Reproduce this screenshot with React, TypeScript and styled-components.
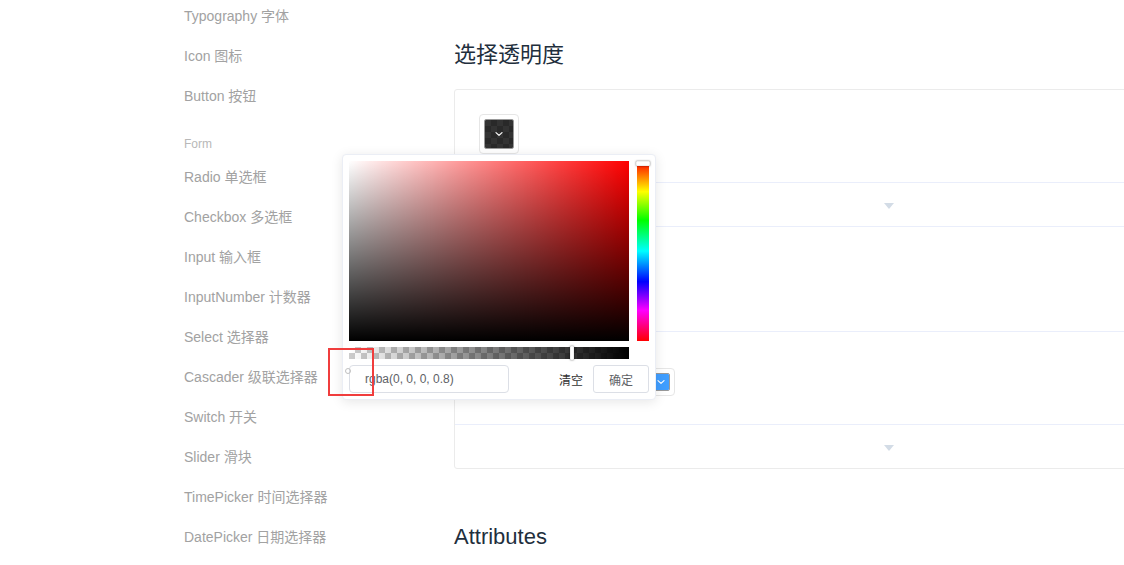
import React from "react";
import styled, { createGlobalStyle } from "styled-components";

const GlobalStyle = createGlobalStyle`
  html, body {
    margin: 0;
    padding: 0;
    background: #fff;
    overflow: hidden;
  }
  body {
    font-family: "Liberation Sans", "Noto Sans CJK SC", sans-serif;
  }
  * { box-sizing: border-box; }
`;

type NavEntry = { label: string; group?: boolean };

const navItems: NavEntry[] = [
	{ label: "Typography 字体" },
	{ label: "Icon 图标" },
	{ label: "Button 按钮" },
	{ label: "Form", group: true },
	{ label: "Radio 单选框" },
	{ label: "Checkbox 多选框" },
	{ label: "Input 输入框" },
	{ label: "InputNumber 计数器" },
	{ label: "Select 选择器" },
	{ label: "Cascader 级联选择器" },
	{ label: "Switch 开关" },
	{ label: "Slider 滑块" },
	{ label: "TimePicker 时间选择器" },
	{ label: "DatePicker 日期选择器" }
];

const CHECKER = `
	linear-gradient(45deg, #ccc 25%, transparent 25%),
	linear-gradient(135deg, #ccc 25%, transparent 25%),
	linear-gradient(45deg, transparent 75%, #ccc 75%),
	linear-gradient(135deg, transparent 75%, #ccc 75%)
`;

const Arrow = () => (
	<svg width="12" height="12" viewBox="0 0 12 12" fill="none">
		<path d="M3 4.6 L6 7.4 L9 4.6" stroke="#fff" strokeWidth="1.2" strokeLinecap="round" strokeLinejoin="round" />
	</svg>
);

const Picker = ({ size, color }: { size: number, color: string }) => (
	<Trigger size={size}>
		<Swatch>
			<SwatchColor color={color}>
				<Arrow />
			</SwatchColor>
		</Swatch>
	</Trigger>
);

const App = () => {
	return (
		<Page>
			<GlobalStyle />
			<Sidebar>
				{navItems.map((item) =>
					item.group
						? <GroupTitle key={item.label}>{item.label}</GroupTitle>
						: <NavItem key={item.label}>{item.label}</NavItem>
				)}
			</Sidebar>
			<Content>
				<Heading>选择透明度</Heading>
				<DemoBlock>
					<Source>
						<Picker size={40} color="rgba(0, 0, 0, 0.8)" />
					</Source>
					<Control><Caret /></Control>
					<Blank />
					<Source>
						<Picker size={40} color="#409EFF" />
						<Picker size={36} color="#409EFF" />
						<Picker size={32} color="#409EFF" />
						<Picker size={28} color="#409EFF" />
					</Source>
					<Control><Caret /></Control>
				</DemoBlock>
				<AttrHeading>Attributes</AttrHeading>
			</Content>

			<Dropdown>
				<PanelRow>
					<SvPanel />
					<HueSlider>
						<HueThumb />
					</HueSlider>
				</PanelRow>
				<AlphaSlider>
					<AlphaBar />
					<AlphaThumb style={{ left: `${0.8 * 276}px` }} />
				</AlphaSlider>
				<Buttons>
					<ValueInput readOnly value="rgba(0, 0, 0, 0.8)" />
					<ClearLink>清空</ClearLink>
					<ConfirmButton>确定</ConfirmButton>
				</Buttons>
				<Ring />
			</Dropdown>
			<Annotation />
		</Page>
	);
};

const Page = styled.div`
	position: relative;
	display: flex;
	width: 1124px;
	height: 565px;
	overflow: hidden;
`;

const Sidebar = styled.nav`
	flex: 0 0 454px;
	padding-left: 184px;
	margin-top: -4px;
	display: flex;
	flex-direction: column;
`;

const NavItem = styled.div`
	font-size: 14px;
	line-height: 40px;
	height: 40px;
	color: #a2a2a2;
	white-space: nowrap;
`;

const GroupTitle = styled.div`
	font-size: 12px;
	line-height: 26px;
	margin-top: 15px;
	color: #b8b8b8;
`;

const Content = styled.main`
	flex: 0 0 870px;
	padding-top: 42px;
`;

const Heading = styled.h3`
	margin: 0 0 21px;
	font-size: 22px;
	line-height: 26px;
	font-weight: 400;
	color: #1f2f3d;
`;

const AttrHeading = styled(Heading)`
	margin-top: 55px;
`;

const DemoBlock = styled.div`
	border: 1px solid #ebebeb;
	border-radius: 3px;
	display: flex;
	flex-direction: column;
`;

const Source = styled.div`
	display: flex;
	align-items: flex-end;
	gap: 20px;
	padding: 24px 24px 28px;
	border-top: 1px solid #eaeefb;
	&:first-child { border-top: none; }
`;

const Control = styled.div`
	height: 44px;
	border-top: 1px solid #eaeefb;
	display: flex;
	align-items: center;
	justify-content: center;
	padding-top: 3px;
`;

const Caret = styled.div`
	width: 0;
	height: 0;
	border-left: 5px solid transparent;
	border-right: 5px solid transparent;
	border-top: 6px solid #d3dce6;
`;

const Blank = styled.div`
	height: 105px;
	border-top: 1px solid #eaeefb;
`;

const Trigger = styled.div<{ size: number }>`
	width: ${p => p.size}px;
	height: ${p => p.size}px;
	padding: 4px;
	border: 1px solid #e6e6e6;
	border-radius: 4px;
	background: #fff;
	flex-shrink: 0;
`;

const Swatch = styled.div`
	width: 100%;
	height: 100%;
	border: 1px solid #999;
	border-radius: 2px;
	background-color: #fff;
	background-image: ${CHECKER};
	background-size: 12px 12px;
	background-position: 0 0, 6px 0, 6px -6px, 0 6px;
	overflow: hidden;
`;

const SwatchColor = styled.div<{ color: string }>`
	width: 100%;
	height: 100%;
	background: ${p => p.color};
	display: flex;
	align-items: center;
	justify-content: center;
`;

const Dropdown = styled.div`
	position: absolute;
	left: 342px;
	top: 154px;
	width: 314px;
	padding: 6px;
	background: #fff;
	border: 1px solid #ebeef5;
	border-radius: 4px;
	box-shadow: 0 2px 12px 0 rgba(0, 0, 0, 0.1);
	z-index: 10;
`;

const PanelRow = styled.div`
	display: flex;
	gap: 8px;
`;

const SvPanel = styled.div`
	width: 280px;
	height: 180px;
	background-color: #f00;
	background-image:
		linear-gradient(to top, #000, rgba(0, 0, 0, 0)),
		linear-gradient(to right, #fff, rgba(255, 255, 255, 0));
`;

const HueSlider = styled.div`
	position: relative;
	width: 12px;
	height: 180px;
	background: linear-gradient(to bottom, #f00 0, #ff0 17%, #0f0 33%, #0ff 50%, #00f 67%, #f0f 83%, #f00 100%);
`;

const HueThumb = styled.div`
	position: absolute;
	left: -1px;
	right: -1px;
	top: 0;
	height: 5px;
	background: #fff;
	border: 1px solid #f0f0f0;
	border-radius: 1px;
	box-shadow: 0 0 2px rgba(0, 0, 0, 0.6);
`;

const AlphaSlider = styled.div`
	position: relative;
	width: 280px;
	height: 12px;
	margin-top: 6px;
	background-color: #fff;
	background-image: ${CHECKER};
	background-size: 12px 12px;
	background-position: 0 0, 6px 0, 6px -6px, 0 6px;
`;

const AlphaBar = styled.div`
	position: absolute;
	inset: 0;
	background: linear-gradient(to right, rgba(0, 0, 0, 0), rgb(0, 0, 0));
`;

const AlphaThumb = styled.div`
	position: absolute;
	top: -1px;
	width: 4px;
	height: 14px;
	background: #fff;
	border: 1px solid #f0f0f0;
	border-radius: 1px;
	box-shadow: 0 0 2px rgba(0, 0, 0, 0.6);
`;

const Buttons = styled.div`
	display: flex;
	align-items: center;
	margin-top: 6px;
`;

const ValueInput = styled.input`
	width: 160px;
	height: 28px;
	padding: 0 15px;
	border: 1px solid #dcdfe6;
	border-radius: 4px;
	font-family: "Liberation Sans", "Noto Sans CJK SC", sans-serif;
	font-size: 12px;
	color: #606266;
	outline: none;
	margin-right: auto;
`;

const ClearLink = styled.span`
	font-size: 12px;
	color: #333;
	margin-right: 10px;
`;

const ConfirmButton = styled.button`
	height: 28px;
	padding: 0 15px;
	border: 1px solid #dcdfe6;
	border-radius: 3px;
	background: #fff;
	font-family: "Liberation Sans", "Noto Sans CJK SC", sans-serif;
	font-size: 12px;
	color: #606266;
`;

const Ring = styled.div`
	position: absolute;
	left: 2px;
	top: 213px;
	width: 6px;
	height: 6px;
	border: 1px solid #c0c0c0;
	border-radius: 50%;
`;

const Annotation = styled.div`
	position: absolute;
	left: 328px;
	top: 348px;
	width: 46px;
	height: 48px;
	border: 2px solid #f03d3d;
	z-index: 20;
`;

export default App;
